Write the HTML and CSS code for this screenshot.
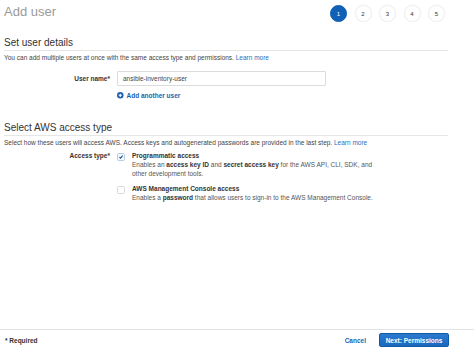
FILE: index.html
```html
<!DOCTYPE html>
<html>
<head>
<meta charset="utf-8">
<link rel="stylesheet" href="styles.css">
</head>
<body>
<div class="page">
  <div class="main">
    <div class="header">
      <h1 class="title">Add user</h1>
      <ol class="steps">
        <li class="step active">1</li>
        <li class="step">2</li>
        <li class="step">3</li>
        <li class="step">4</li>
        <li class="step">5</li>
      </ol>
    </div>

    <h2 class="section-title first">Set user details</h2>
    <p class="desc">You can add multiple users at once with the same access type and permissions. <a class="link">Learn more</a></p>

    <div class="form-row name-row">
      <label class="label">User name*</label>
      <div class="input">ansible-inventory-user</div>
    </div>
    <div class="add-row">
      <a class="add-link"><svg class="plus" viewBox="0 0 12 12" width="6.5" height="6.5"><circle cx="6" cy="6" r="6" fill="#1d5fae"/><path d="M6 3v6M3 6h6" stroke="#fff" stroke-width="2"/></svg>Add another user</a>
    </div>

    <h2 class="section-title second">Select AWS access type</h2>
    <p class="desc">Select how these users will access AWS. Access keys and autogenerated passwords are provided in the last step. <a class="link">Learn more</a></p>

    <div class="form-row access-row">
      <label class="label">Access type*</label>
      <div class="options">
        <div class="option">
          <span class="checkbox checked"><svg viewBox="0 0 10 10" width="8" height="8"><path d="M2.4 5.2l1.8 1.8 3.5-4.2" fill="none" stroke="#144f96" stroke-width="1.7"/></svg></span>
          <div class="option-text">
            <div class="option-title">Programmatic access</div>
            <div class="option-desc">Enables an <b>access key ID</b> and <b>secret access key</b> for the AWS API, CLI, SDK, and other development tools.</div>
          </div>
        </div>
        <div class="option second-opt">
          <span class="checkbox"></span>
          <div class="option-text">
            <div class="option-title">AWS Management Console access</div>
            <div class="option-desc">Enables a <b>password</b> that allows users to sign-in to the AWS Management Console.</div>
          </div>
        </div>
      </div>
    </div>
  </div>

  <div class="footer">
    <span class="required">* Required</span>
    <span class="spacer"></span>
    <a class="cancel">Cancel</a>
    <button class="next">Next: Permissions</button>
  </div>
</div>
</body>
</html>
```

FILE: styles.css
```css
* { box-sizing: border-box; }
html, body {
  margin: 0;
  padding: 0;
  background: #fff;
}
body {
  font-family: "Liberation Sans", Arial, sans-serif;
  color: #444;
  font-size: 6.5px;
}
.page {
  width: 474px;
  height: 350px;
  display: flex;
  flex-direction: column;
}
.main {
  flex: 1;
  padding: 0 26px 0 4px;
}
.header {
  display: flex;
  justify-content: space-between;
  align-items: flex-start;
  padding-top: 3px;
}
.title {
  margin: 0;
  font-size: 13px;
  line-height: 17px;
  font-weight: normal;
  color: #9a9a9a;
}
.steps {
  list-style: none;
  margin: 2px 3px 0 0;
  padding: 0;
  display: flex;
  gap: 7.5px;
}
.step {
  width: 17px;
  height: 17px;
  border-radius: 50%;
  display: flex;
  align-items: center;
  justify-content: center;
  font-size: 6px;
  color: #333;
  background: #fff;
  border: 1px solid #f0f0f0;
  box-shadow: 0 0 1px rgba(0,0,0,0.08);
}
.step.active {
  background: #1160b5;
  border-color: #1160b5;
  color: #fff;
}
.section-title {
  margin: 0;
  font-size: 10px;
  line-height: 12px;
  font-weight: normal;
  color: #333;
  padding-bottom: 1px;
  border-bottom: 1px solid #e6e6e6;
}
.section-title.first { margin-top: 15px; }
.section-title.second { margin-top: 21.5px; }
.desc {
  margin: 2px 0 0;
  line-height: 9px;
  color: #444;
}
.link {
  color: #2a6fbd;
}
.form-row {
  display: grid;
  grid-template-columns: 106px 1fr;
  column-gap: 7px;
}
.label {
  text-align: right;
  font-weight: bold;
  color: #333;
  line-height: 9px;
}
.name-row {
  margin-top: 9px;
  align-items: center;
}
.input {
  width: 209px;
  height: 15px;
  border: 1px solid #dcdcdc;
  border-radius: 1px;
  padding-left: 5px;
  display: flex;
  align-items: center;
  color: #444;
}
.add-row {
  margin-top: 5px;
  padding-left: 113px;
  line-height: 9px;
}
.add-link {
  display: inline-flex;
  align-items: center;
  gap: 3px;
  font-weight: bold;
  color: #1d5fae;
}
.access-row {
  margin-top: 4px;
  align-items: start;
}
.options {
  display: flex;
  flex-direction: column;
  gap: 6px;
}
.option {
  display: flex;
  gap: 7px;
  align-items: flex-start;
}
.checkbox {
  width: 8px;
  height: 8px;
  margin-top: 1.5px;
  border: 1px solid #d9d9d9;
  border-radius: 1.5px;
  background: #fff;
  display: flex;
  align-items: center;
  justify-content: center;
  flex: none;
}
.checkbox.checked {
  border-color: #b9cce4;
  background: #f3f7fc;
}
.checkbox svg { display: block; }
.option-text {
  width: 246px;
  line-height: 9px;
}
.option-title {
  font-weight: bold;
  color: #333;
}
.option-desc {
  color: #555;
}
.option-desc b { color: #333; }
.footer {
  height: 21px;
  border-top: 1px solid #e3e3e3;
  display: flex;
  align-items: center;
  padding: 0 25px 0 5px;
  gap: 13px;
}
.required {
  font-weight: bold;
  color: #333;
}
.spacer { flex: 1; }
.cancel {
  font-weight: bold;
  color: #1d5fae;
}
.next {
  width: 70px;
  height: 14px;
  padding: 0;
  border: 1px solid #0f5aa8;
  border-radius: 2px;
  background: linear-gradient(#2a7ad0, #1a69bf);
  color: #fff;
  font-family: "Liberation Sans", Arial, sans-serif;
  font-weight: bold;
  font-size: 6.5px;
}
```
